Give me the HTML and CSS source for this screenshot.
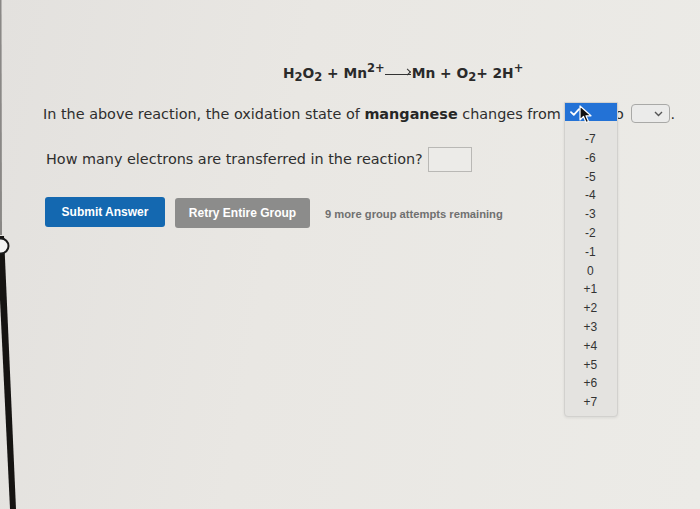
FILE: index.html
```html
<!DOCTYPE html>
<html>
<head>
<meta charset="utf-8">
<link rel="stylesheet" href="styles.css">
</head>
<body>
<div class="page">
  <svg class="edge" width="40" height="509" viewBox="0 0 40 509">
    <polygon points="0,0 1.5,0 2,235 0,235" fill="#8a8886"/>
    <polygon points="0,236 4,236 16,509 10,509 0,300" fill="#161412"/>
    <circle cx="1" cy="246" r="7.5" fill="#f4f4f4" stroke="#1b1b1b" stroke-width="2"/>
  </svg>
  <div class="equation">H<sub>2</sub>O<sub>2</sub> + Mn<sup>2+</sup><span class="arrow"></span>Mn + O<sub>2</sub>+ 2H<sup>+</sup></div>

  <p class="q q1">In the above reaction, the oxidation state of <b>manganese</b> changes from
    <span class="selwrap">
      <span class="popup">
        <span class="opt-sel">
          <svg class="check" width="10" height="8" viewBox="0 0 10 8"><path d="M1 4.2 L3.8 6.8 L9 1.2" fill="none" stroke="#fff" stroke-width="1.8" stroke-linecap="round" stroke-linejoin="round"/></svg>
          <svg class="cursor" width="14" height="20" viewBox="0 0 14 20"><path d="M1 1 L1 15 L4.5 11.5 L7 17.5 L9.5 16.5 L7 10.8 L12 10.8 Z" fill="#111" stroke="#fff" stroke-width="1.2" stroke-linejoin="round"/></svg>
        </span>
        <span class="opt">-7</span><span class="opt">-6</span><span class="opt">-5</span><span class="opt">-4</span><span class="opt">-3</span><span class="opt">-2</span><span class="opt">-1</span><span class="opt">0</span><span class="opt">+1</span><span class="opt">+2</span><span class="opt">+3</span><span class="opt">+4</span><span class="opt">+5</span><span class="opt">+6</span><span class="opt">+7</span>
      </span>
    </span>to <span class="sel"><svg class="chev" width="9" height="6" viewBox="0 0 9 6"><path d="M1 1 L4.5 4.5 L8 1" fill="none" stroke="#555" stroke-width="1.4"/></svg></span>.</p>

  <p class="q q2">How many electrons are transferred in the reaction? <span class="inp"></span></p>

  <div class="actions">
    <span class="btn btn-blue">Submit Answer</span>
    <span class="btn btn-gray">Retry Entire Group</span>
    <span class="remain">9 more group attempts remaining</span>
  </div>
</div>
</body>
</html>
```
FILE: styles.css
```css
html, body {
  margin: 0;
  padding: 0;
}
body {
  width: 700px;
  height: 509px;
  overflow: hidden;
  background: linear-gradient(100deg, #e3e1de 0%, #e9e7e3 40%, #ecebe7 100%);
  font-family: "DejaVu Sans", Verdana, sans-serif;
  color: #2b2b2b;
}
.page {
  position: relative;
  width: 700px;
  height: 509px;
  padding: 0 0 0 43px;
  box-sizing: border-box;
}
.edge {
  position: absolute;
  left: 0;
  top: 0;
}
.equation {
  padding-top: 65px;
  margin-left: 240px;
  font-weight: bold;
  font-size: 13.8px;
  color: #2a2a2a;
  height: 20px;
}
.equation sub {
  font-size: 11.5px;
  vertical-align: -3px;
  line-height: 0;
}
.equation sup {
  font-size: 11.5px;
  vertical-align: 6px;
  line-height: 0;
}
.arrow {
  display: inline-block;
  position: relative;
  width: 26px;
  height: 1px;
  background: #333;
  vertical-align: 3px;
  margin: 0 1px 0 0;
}
.arrow::after {
  content: "";
  position: absolute;
  right: 0;
  top: -2px;
  width: 4px;
  height: 4px;
  border-top: 1px solid #333;
  border-right: 1px solid #333;
  transform: rotate(45deg);
  transform-origin: 100% 0;
}
.q {
  margin: 0;
  font-size: 14.4px;
  line-height: 20px;
  color: #2e2e2e;
}
.q1 {
  margin-top: 19px;
}
.q1 b {
  color: #262626;
}
.q2 {
  margin-top: 23px;
  margin-left: 3px;
}
.selwrap {
  position: relative;
  display: inline-block;
  width: 44px;
  height: 18px;
  vertical-align: -3px;
}
.sel {
  display: inline-block;
  width: 37px;
  height: 17px;
  border: 1px solid #a9a9a7;
  border-radius: 4px;
  background: #ebebea;
  vertical-align: -4px;
  position: relative;
  margin-left: 3px;
}
.chev {
  position: absolute;
  right: 6px;
  top: 6px;
}
.popup {
  position: absolute;
  left: -1px;
  top: -2px;
  width: 52px;
  display: flex;
  flex-direction: column;
  align-items: center;
  background: #e4e3e0;
  border: 1px solid #d2d1ce;
  border-radius: 0 0 4px 4px;
  box-shadow: 0 1px 3px rgba(0,0,0,0.08);
  padding-bottom: 4px;
  z-index: 2;
}
.opt-sel {
  position: relative;
  align-self: stretch;
  height: 18px;
  margin-bottom: 9px;
  background: #2372d6;
}
.check {
  position: absolute;
  left: 5px;
  top: 5px;
}
.cursor {
  position: absolute;
  left: 14px;
  top: 2px;
}
.opt {
  display: block;
  height: 18.8px;
  line-height: 18.8px;
  font-family: "Liberation Sans", Arial, sans-serif;
  font-size: 12px;
  color: #333;
  padding-right: 2px;
}
.inp {
  display: inline-block;
  width: 42px;
  height: 23px;
  border: 1px solid #b9b8b5;
  background: #ecebe8;
  vertical-align: -8px;
  margin-left: 1px;
}
.actions {
  display: flex;
  align-items: center;
  margin-top: 24px;
  margin-left: 2px;
  font-family: "Liberation Sans", Arial, sans-serif;
  font-weight: bold;
}
.btn {
  display: inline-flex;
  align-items: center;
  justify-content: center;
  height: 30px;
  border-radius: 3px;
  color: #fff;
  font-size: 12px;
}
.btn-blue {
  width: 120px;
  background: #1468b0;
}
.btn-gray {
  width: 135px;
  margin-left: 10px;
  margin-top: 2px;
  background: #8c8c8b;
}
.remain {
  margin-left: 15px;
  margin-top: 4px;
  font-size: 11.2px;
  color: #707070;
}
```
